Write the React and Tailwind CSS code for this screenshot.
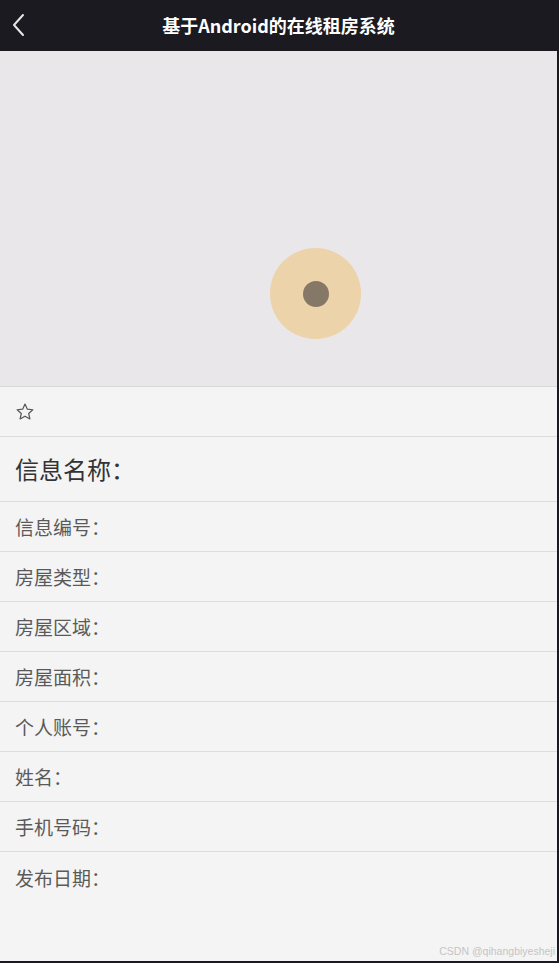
const fields = ["信息编号：", "房屋类型：", "房屋区域：", "房屋面积：", "个人账号：", "姓名：", "手机号码：", "发布日期："];

export default function App() {
  return (
    <div
      className="w-[559px] h-[963px] bg-[#1b1a20] flex flex-col overflow-hidden"
      style={{ fontFamily: '"Noto Sans CJK SC", "Noto Sans", sans-serif' }}
    >
      <div className="w-[557px] h-[961px] flex flex-col bg-[#f4f4f4]">
        {/* header */}
        <div className="h-[51px] bg-[#1b1a20] flex items-center relative shrink-0">
          <svg className="absolute left-[10px] top-[13px]" width="18" height="24" viewBox="0 0 18 24" fill="none">
            <path d="M13 2 L4 12 L13 22" stroke="#e6e6e6" strokeWidth="2" strokeLinecap="round" strokeLinejoin="round" />
          </svg>
          <div className="flex-1 text-center text-white font-bold text-[18px]">
            基于Android的在线租房系统
          </div>
        </div>

        {/* image placeholder */}
        <div className="h-[336px] bg-[#e9e7ea] relative shrink-0 border-b border-[#d9d9d9]">
          <div className="absolute left-[270px] top-[197px] w-[91px] h-[91px] rounded-full bg-[#edd3aa] flex items-center justify-center">
            <div className="w-[26px] h-[26px] rounded-full bg-[#857866]" />
          </div>
        </div>

        {/* star row */}
        <div className="h-[50px] flex items-center px-[15px] border-b border-[#dcdcdc] shrink-0">
          <svg width="20" height="20" viewBox="0 0 24 24" fill="none">
            <path
              d="M12 2.5 L14.8 8.6 L21.4 9.3 L16.4 13.8 L17.9 20.4 L12 17 L6.1 20.4 L7.6 13.8 L2.6 9.3 L9.2 8.6 Z"
              stroke="#555"
              strokeWidth="1.4"
              strokeLinejoin="round"
            />
          </svg>
        </div>

        {/* title row */}
        <div className="h-[65px] flex items-center px-[15px] border-b border-[#dcdcdc] shrink-0">
          <span className="text-[24px] text-[#333]">信息名称：</span>
        </div>

        {fields.map((f, i) => (
          <div
            key={f}
            className={`h-[50px] flex items-center px-[15px] pt-[2px] shrink-0 ${i < fields.length - 1 ? "border-b border-[#dcdcdc]" : ""}`}
          >
            <span className="text-[19px] text-[#5a5a5a]">{f}</span>
          </div>
        ))}

        <div className="flex-1 relative">
          <span
            className="absolute right-[2px] bottom-[1px] text-[10.5px] text-[#c4c4c4]"
            style={{ fontFamily: '"Liberation Sans", sans-serif' }}
          >
            CSDN @qihangbiyesheji
          </span>
        </div>
      </div>
    </div>
  );
}
